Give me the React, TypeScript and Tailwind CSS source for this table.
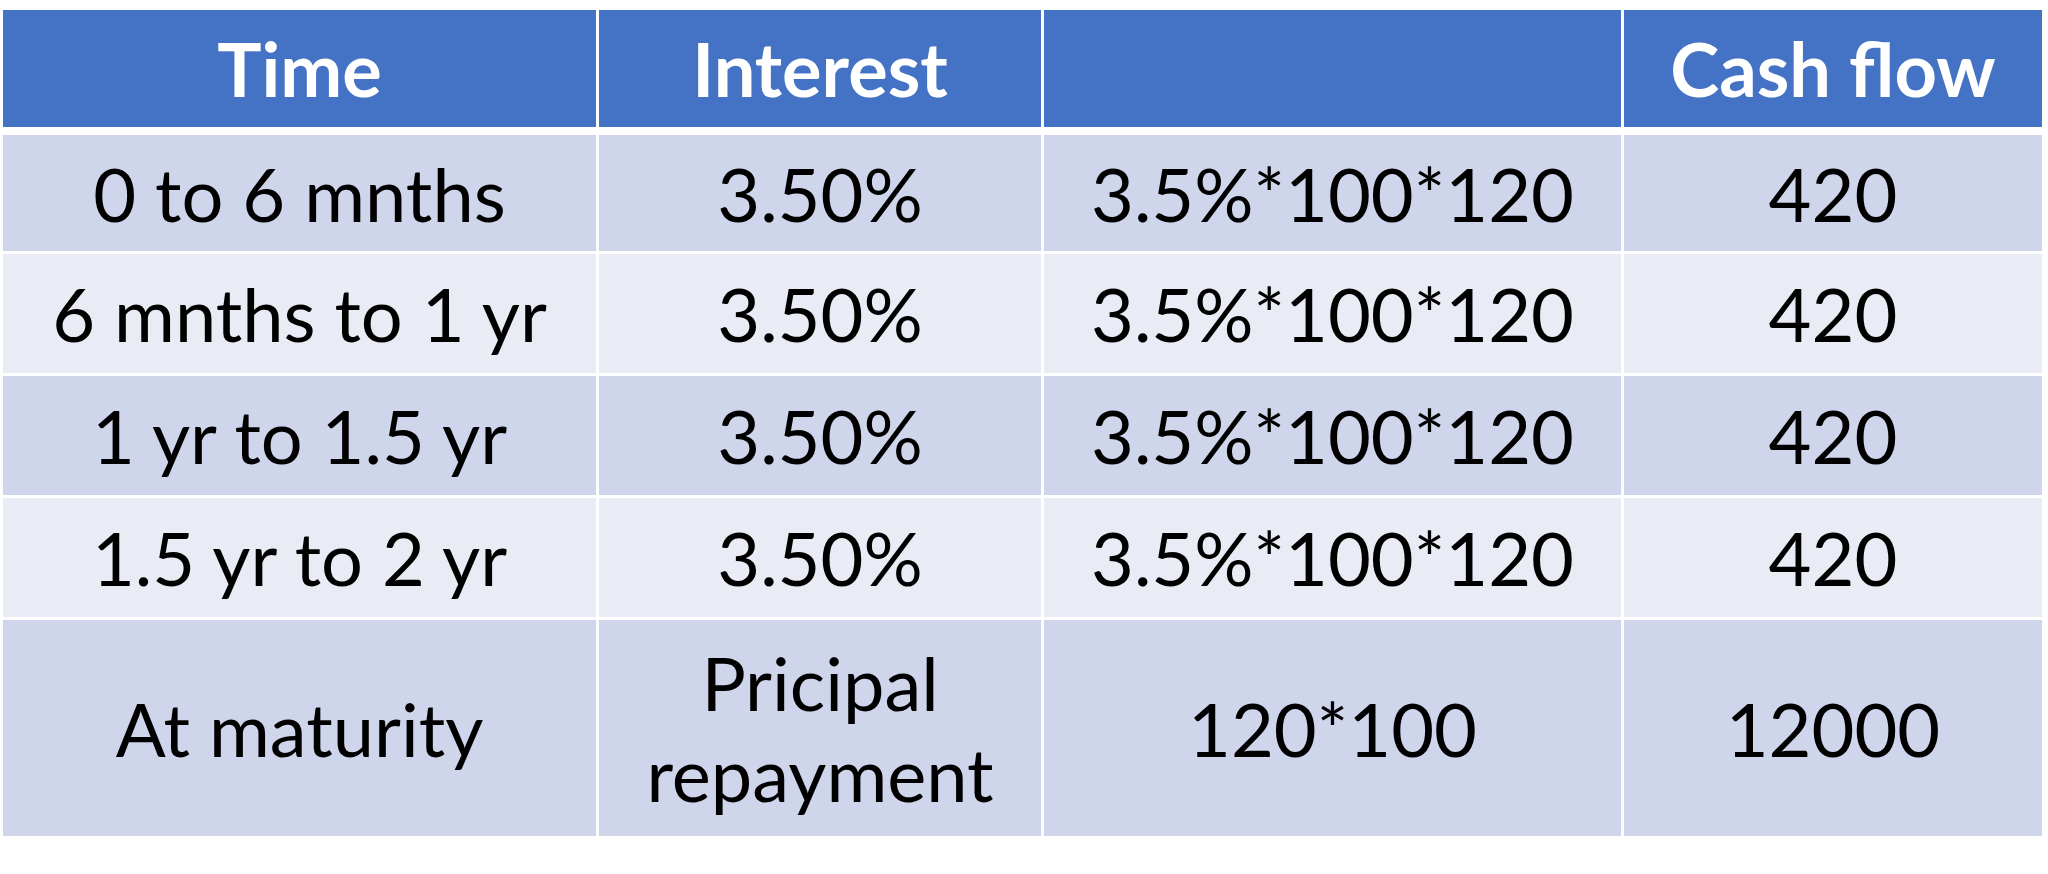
import React from "react";

const rows = [
  { time: "0 to 6 mnths", interest: ["3.50%"], calc: "3.5%*100*120", cash: "420", h: "h-[116px]", bg: "bg-[#cfd5ea]" },
  { time: "6 mnths to 1 yr", interest: ["3.50%"], calc: "3.5%*100*120", cash: "420", h: "h-[119px]", bg: "bg-[#e9ebf5]" },
  { time: "1 yr to 1.5 yr", interest: ["3.50%"], calc: "3.5%*100*120", cash: "420", h: "h-[119px]", bg: "bg-[#cfd5ea]" },
  { time: "1.5 yr to 2 yr", interest: ["3.50%"], calc: "3.5%*100*120", cash: "420", h: "h-[119px]", bg: "bg-[#e9ebf5]" },
  { time: "At maturity", interest: ["Pricipal", "repayment"], calc: "120*100", cash: "12000", h: "h-[216px]", bg: "bg-[#cfd5ea]" },
];

const cols = "grid grid-cols-[593px_442px_577px_418px] gap-x-[3px]";
const cell = "flex flex-col items-center justify-center text-center";

export default function App() {
  return (
    <div className="w-[2048px] h-[874px] bg-white pt-[10px] pl-[3px] font-['Lato','Liberation_Sans',sans-serif] text-[74px] leading-[91px] text-black">
      <div className="flex flex-col gap-y-[3px]">
        <div className={`${cols} h-[117px] mb-[5px] text-white font-bold`}>
          <div className={`${cell} bg-[#4472c4]`}>Time</div>
          <div className={`${cell} bg-[#4472c4]`}>Interest</div>
          <div className={`${cell} bg-[#4472c4]`}></div>
          <div className={`${cell} bg-[#4472c4]`}>Cash flow</div>
        </div>
        {rows.map((r, i) => (
          <div key={i} className={`${cols} ${r.h}`}>
            <div className={`${cell} ${r.bg}`}>{r.time}</div>
            <div className={`${cell} ${r.bg}`}>
              {r.interest.map((t) => (
                <span key={t}>{t}</span>
              ))}
            </div>
            <div className={`${cell} ${r.bg}`}>{r.calc}</div>
            <div className={`${cell} ${r.bg}`}>{r.cash}</div>
          </div>
        ))}
      </div>
    </div>
  );
}
